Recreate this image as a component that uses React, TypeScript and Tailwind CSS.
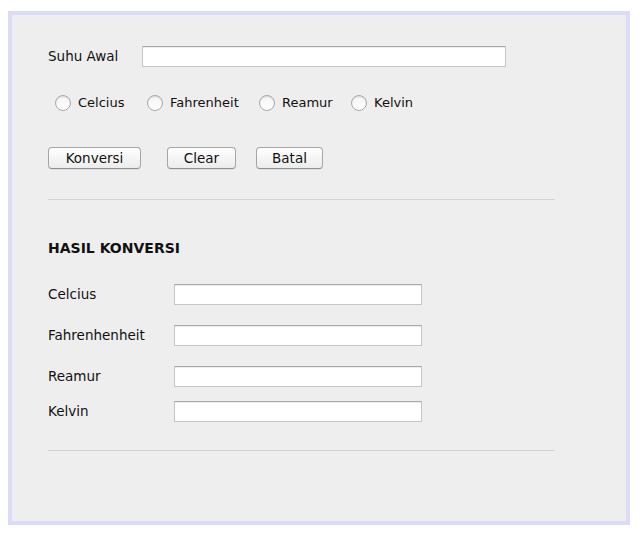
import React from "react";

const font = { fontFamily: '"DejaVu Sans", "Liberation Sans", sans-serif' };

function Field({ w }: { w: string }) {
  return (
    <div
      className={`${w} h-[21px] bg-white border border-[#c6c6c6] border-t-[#a9a9a9] shadow-[inset_0_1px_1px_rgba(0,0,0,0.08)]`}
    />
  );
}

function Radio({ label, w }: { label: string; w: string }) {
  return (
    <div className={`flex items-center ${w}`}>
      <div className="w-[16px] h-[16px] rounded-full border border-[#a9a9a9] bg-gradient-to-b from-[#f4f4f4] to-[#ffffff] shadow-[inset_0_1px_1px_rgba(0,0,0,0.12)]" />
      <span className="ml-[7px] text-[13px] leading-[16px] text-[#111111]">{label}</span>
    </div>
  );
}

function Btn({ label, w }: { label: string; w: string }) {
  return (
    <div
      className={`${w} h-[22px] flex items-center justify-center rounded-[4px] border border-[#a6a6a6] border-b-[#8f8f8f] bg-gradient-to-b from-[#ffffff] to-[#ececec] shadow-[0_1px_0_rgba(0,0,0,0.05)] text-[13.5px] text-[#111111]`}
    >
      {label}
    </div>
  );
}

function ResultRow({ label, mt }: { label: string; mt: string }) {
  return (
    <div className={`flex items-center ${mt}`}>
      <div className="w-[126px] text-[13.5px] text-[#111111]">{label}</div>
      <Field w="w-[248px]" />
    </div>
  );
}

export default function App() {
  return (
    <div className="w-[640px] h-[535px] bg-white pt-[11px] pl-[8px]" style={font}>
      <div className="w-[622px] h-[514px] border-[4px] border-[#dcdcf9] bg-[#eeeeee] pl-[36px] pt-[31px]">
        <div className="flex items-center">
          <div className="w-[94px] text-[13.5px] text-[#111111]">Suhu Awal</div>
          <Field w="w-[364px]" />
        </div>
        <div className="flex items-center mt-[28px] pl-[7px]">
          <Radio label="Celcius" w="w-[92px]" />
          <Radio label="Fahrenheit" w="w-[112px]" />
          <Radio label="Reamur" w="w-[92px]" />
          <Radio label="Kelvin" w="w-[80px]" />
        </div>
        <div className="flex items-center mt-[36px]">
          <Btn label="Konversi" w="w-[93px]" />
          <div className="w-[26px]" />
          <Btn label="Clear" w="w-[69px]" />
          <div className="w-[20px]" />
          <Btn label="Batal" w="w-[67px]" />
        </div>
        <div className="mt-[30px] w-[507px] h-px bg-[#d2d2d2]" />
        <div className="mt-[38px] h-[20px] leading-[20px] text-[14px] font-bold text-[#111111]">
          HASIL KONVERSI
        </div>
        <ResultRow label="Celcius" mt="mt-[26px]" />
        <ResultRow label="Fahrenhenheit" mt="mt-[20px]" />
        <ResultRow label="Reamur" mt="mt-[20px]" />
        <ResultRow label="Kelvin" mt="mt-[14px]" />
        <div className="mt-[28px] w-[507px] h-px bg-[#d2d2d2]" />
      </div>
    </div>
  );
}
